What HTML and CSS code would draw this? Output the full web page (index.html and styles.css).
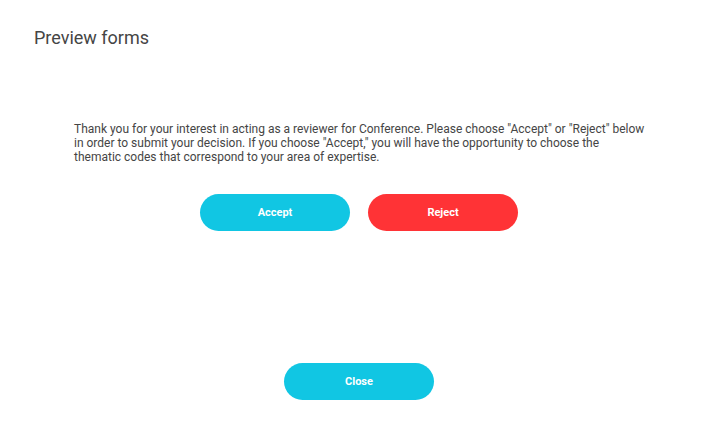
FILE: index.html
```html
<!DOCTYPE html>
<html>
<head>
<meta charset="utf-8">
<link rel="stylesheet" href="styles.css">
</head>
<body>
<div class="modal">
  <div class="modal-header">
    <h1 class="modal-title">Preview forms</h1>
  </div>
  <div class="modal-body">
    <p class="intro">Thank you for your interest in acting as a reviewer for Conference. Please choose "Accept" or "Reject" below in order to submit your decision. If you choose "Accept," you will have the opportunity to choose the thematic codes that correspond to your area of expertise.</p>
    <div class="choice-row">
      <button class="btn btn-cyan">Accept</button>
      <button class="btn btn-red">Reject</button>
    </div>
  </div>
  <div class="modal-footer">
    <button class="btn btn-cyan">Close</button>
  </div>
</div>
</body>
</html>
```
FILE: styles.css
```css
html, body {
  margin: 0;
  padding: 0;
  background: #ffffff;
}
body {
  font-family: Roboto, "Liberation Sans", Arial, sans-serif;
  color: #444444;
}
.modal {
  width: 718px;
  height: 436px;
  display: flex;
  flex-direction: column;
  box-sizing: border-box;
  border-radius: 4px;
  background: #fff;
}
.modal-header {
  padding: 27px 34px 0 34px;
}
.modal-title {
  margin: 0;
  font-size: 18px;
  font-weight: 400;
  line-height: 22px;
  color: #454545;
}
.modal-body {
  padding: 73px 74px 0 74px;
}
.intro {
  margin: 0;
  width: 575px;
  font-size: 12px;
  line-height: 14px;
  color: #454545;
}
.choice-row {
  display: flex;
  justify-content: center;
  gap: 18px;
  margin-top: 30px;
  padding-left: 0;
  margin-left: -74px;
  margin-right: -74px;
}
.btn {
  width: 150px;
  height: 37px;
  border: none;
  border-radius: 19px;
  font-family: Roboto, "Liberation Sans", Arial, sans-serif;
  font-size: 11px;
  font-weight: 700;
  color: #ffffff;
  padding: 0;
  cursor: pointer;
}
.btn-cyan {
  background: #11c6e3;
}
.btn-red {
  background: #ff3336;
}
.modal-footer {
  display: flex;
  justify-content: center;
  margin-top: auto;
  padding-bottom: 36px;
}
```
